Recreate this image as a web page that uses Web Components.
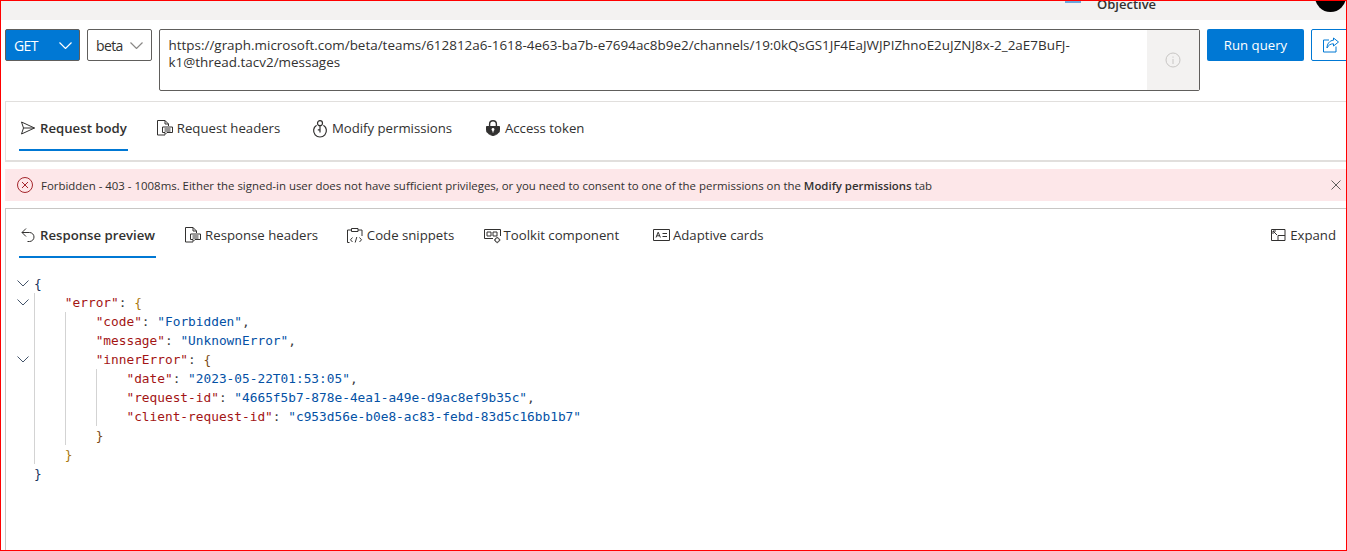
<!DOCTYPE html>
<html>
<head>
<meta charset="utf-8">
<title>Graph Explorer</title>
<style>
  html, body { margin: 0; padding: 0; background: #fff; }
</style>
</head>
<body>
<gx-app>
  <gx-top-strip></gx-top-strip>
  <gx-query-bar></gx-query-bar>
  <gx-panel kind="request">
    <gx-tab icon="send" active>Request body</gx-tab>
    <gx-tab icon="doc">Request headers</gx-tab>
    <gx-tab icon="perm" style="margin-left:1.6px">Modify permissions</gx-tab>
    <gx-tab icon="lock" style="margin-left:2.8px">Access token</gx-tab>
  </gx-panel>
  <gx-message-bar>Forbidden - 403 - 1008ms. Either the signed-in user does not have sufficient privileges, or you need to consent to one of the permissions on the <b style="font-weight:600">Modify permissions</b> tab</gx-message-bar>
  <gx-panel kind="response">
    <gx-tab icon="back" active>Response preview</gx-tab>
    <gx-tab icon="doc">Response headers</gx-tab>
    <gx-tab icon="code" style="margin-left:-1.3px">Code snippets</gx-tab>
    <gx-tab icon="toolkit" style="margin-left:-.7px">Toolkit component</gx-tab>
    <gx-tab icon="card" style="margin-left:3.8px">Adaptive cards</gx-tab>
    <gx-tab icon="expand" slot="end">Expand</gx-tab>
    <gx-json-view slot="body"></gx-json-view>
  </gx-panel>
</gx-app>

<script>
const UI_FONT = '"Open Sans", "Noto Sans", "Liberation Sans", sans-serif';

// icon strokes, all on a 16x16 box
const ICONS = {
  send: '<path d="M1.5 2 14.5 8 1.5 14 3.5 8ZM3.5 8H14.5"/>',
  doc: '<path d="M8 15H.5V.5H8L11.5 4V6M8 .5V4H11.5"/><path d="M5.5 7H15.5V12.5H10L8 14.5V12.5H5.5ZM7.5 9H13.5M7.5 11H13.5"/>',
  perm: '<circle cx="8" cy="3.2" r="2.5" stroke-width="1.2"/><path d="M4.6 5.2A6.4 6.4 0 1 0 11.4 5.2M8 5.8V12.5M8 9.8H5.8" stroke-width="1.2"/>',
  lock: '<path d="M4.6 7V4.2A3.4 3.4 0 0 1 11.4 4.2V7" stroke-width="1.4"/><path d="M1.5 6.5H14.5V10.5C14.5 13 11 15 8 15.5 5 15 1.5 13 1.5 10.5Z" fill="currentColor"/><circle cx="8" cy="9.5" r="1.4" fill="#fff" stroke="none"/><path d="M8 10V12.5" stroke="#fff"/>',
  back: '<path d="M6 1.5 2 5.5 6 9.5M2 5.5H9.5A4.5 4.5 0 0 1 9.5 14.5H7.5"/>',
  code: '<path d="M2.5 15.5H.5V3H4.5M11 3H15V9M4.5 1.5H11V4.5H4.5Z"/><path d="M5.5 10.5 3.5 12.8 5.5 15M12.5 10.5 14.5 12.8 12.5 15M9.8 10 8.2 15.5"/>',
  toolkit: '<path d="M9 11.5H.5V2.5H16.5V9"/><path d="M3 5H7V9H3ZM9 5H13V9H9Z"/><circle cx="13.2" cy="13" r="2.2"/><path d="M13.2 9.8V10.8M13.2 15.2V16.2M10 13H11M15.4 13H16.4"/>',
  card: '<path d="M.5 2.5H16.5V13.5H.5Z"/><path d="M3 10.5 5.2 5.2 7.4 10.5M3.9 8.8H6.5M9.5 6.5H14M9.5 9.5H14"/>',
  expand: '<path d="M1.5 2.5H15V13.5H1.5Z"/><path d="M8 13.5V8.5H15M3 4 7 8M3 4H6M3 4V7"/>'
};

class GxIcon extends HTMLElement {
  constructor() {
    super();
    this.attachShadow({ mode: 'open' });
  }
  connectedCallback() {
    const body = ICONS[this.getAttribute('name')] || '';
    this.shadowRoot.innerHTML = `
      <style>
        :host { display: inline-flex; flex: none; width: 16px; height: 16px; color: #323130; }
        svg { width: 16px; height: 16px; overflow: visible; fill: none; stroke: currentColor; stroke-width: 1; }
      </style>
      <svg viewBox="0 0 16 16">${body}</svg>`;
  }
}
customElements.define('gx-icon', GxIcon);

const appTemplate = document.createElement('template');
appTemplate.innerHTML = `
  <style>
    :host {
      display: flex; flex-direction: column; box-sizing: border-box;
      width: 1347px; height: 551px; border: 1px solid #f00; overflow: hidden;
      background: #fff; color: #323130; font: 14px ${UI_FONT};
    }
  </style>
  <slot></slot>`;
class GxApp extends HTMLElement {
  constructor() {
    super();
    this.attachShadow({ mode: 'open' });
    this.shadowRoot.appendChild(appTemplate.content.cloneNode(true));
  }
}
customElements.define('gx-app', GxApp);

const stripTemplate = document.createElement('template');
stripTemplate.innerHTML = `
  <style>
    :host {
      display: flex; align-items: flex-end; flex: none; height: 19px;
      background: #f3f2f1; overflow: hidden;
    }
    .mark { flex: none; width: 16px; height: 2px; margin: 0 0 17px 1064px; background: #6ca7dc; }
    .name { flex: none; margin: 0 0 8px 16px; font-size: 13px; font-weight: 600; line-height: 16px; white-space: nowrap; }
    .avatar { flex: none; width: 31px; height: 31px; margin: 0 0 8px auto; border-radius: 50%; background: #000; }
  </style>
  <span class="mark"></span>
  <span class="name">Objective</span>
  <span class="avatar"></span>`;
class GxTopStrip extends HTMLElement {
  constructor() {
    super();
    this.attachShadow({ mode: 'open' });
    this.shadowRoot.appendChild(stripTemplate.content.cloneNode(true));
  }
}
customElements.define('gx-top-strip', GxTopStrip);

const queryTemplate = document.createElement('template');
queryTemplate.innerHTML = `
  <style>
    :host { display: flex; flex: none; align-items: flex-start; gap: 7px; margin: 9px 0 10px 4px; height: 62px; }
    :host > * { flex: none; }
    .select {
      box-sizing: border-box; display: flex; align-items: center; justify-content: space-between;
      height: 32px; border: 1px solid #605e5c; border-radius: 2px; padding: 0 7px 0 8px; letter-spacing: -.6px;
    }
    .method { width: 75px; background: #0078d4; color: #fff; }
    .version { width: 65px; background: #fff; }
    .method svg, .version svg { width: 13px; height: 7px; fill: none; stroke-width: 1.2; }
    .method svg { stroke: #fff; margin-right: 0; }
    .version svg { stroke: #8a8886; margin-right: 1px; }
    .url {
      box-sizing: border-box; display: flex; width: 1041px; height: 62px;
      border: 1px solid #605e5c; border-radius: 2px; background: #fff;
    }
    .text { flex: 1; padding: 7px 0 0 8.5px; line-height: 17px; white-space: nowrap; font-size: 13.45px; }
    .info { flex: none; width: 52px; display: flex; align-items: center; justify-content: center; background: #f3f2f1; }
    .info svg { width: 16px; height: 16px; fill: none; stroke: #c8c6c4; }
    .run {
      box-sizing: border-box; width: 97px; height: 32px; display: flex; align-items: center; justify-content: center;
      background: #0078d4; color: #fff; border-radius: 2px; font-weight: 500; font-size: 13.2px;
    }
    .share {
      box-sizing: border-box; width: 40px; height: 32px; display: flex; align-items: center; padding-left: 11px;
      border: 1px solid #0078d4; border-radius: 2px; background: #fff;
    }
    .share svg { width: 16px; height: 16px; fill: none; stroke: #0078d4; }
  </style>
  <div class="select method"><span>GET</span><svg viewBox="0 0 13 7"><path d="M.5 .5 6.5 6.5 12.5 .5"/></svg></div>
  <div class="select version"><span>beta</span><svg viewBox="0 0 13 7"><path d="M.5 .5 6.5 6.5 12.5 .5"/></svg></div>
  <div class="url">
    <div class="text">https://graph.microsoft.com/beta/teams/612812a6-1618-4e63-ba7b-e7694ac8b9e2/channels/19:0kQsGS1JF4EaJWJPIZhnoE2uJZNJ8x-2_2aE7BuFJ-<br>k1@thread.tacv2/messages</div>
    <div class="info"><svg viewBox="0 0 16 16"><circle cx="8" cy="8" r="7"/><path d="M8 7V12M8 4.5V5.7"/></svg></div>
  </div>
  <div class="run">Run query</div>
  <div class="share"><svg viewBox="0 0 16 16"><path d="M6 3H.5V15H13V9.5"/><path d="M10.5 1 15.5 5 10.5 9V6.8C7.5 6.8 5.5 8 4 11 4 7 6.5 3.5 10.5 3.2Z"/></svg></div>`;
class GxQueryBar extends HTMLElement {
  constructor() {
    super();
    this.attachShadow({ mode: 'open' });
    this.shadowRoot.appendChild(queryTemplate.content.cloneNode(true));
  }
}
customElements.define('gx-query-bar', GxQueryBar);

const panelTemplate = document.createElement('template');
panelTemplate.innerHTML = `
  <style>
    :host {
      display: block; flex: none; box-sizing: border-box; margin-left: 4px;
      border-top: 1px solid #e1dfdd; border-left: 1px solid #e1dfdd;
    }
    :host([kind="request"]) { height: 61px; border-bottom: 2px solid #e1dfdd; }
    :host([kind="response"]) { flex: 1; border-color: #c8c6c4; }
    .tabs { display: flex; gap: 28px; padding: 0 9px 0 13px; }
    .end { display: block; margin-left: auto; }
  </style>
  <div class="tabs"><slot></slot><slot name="end" class="end"></slot></div>
  <slot name="body"></slot>`;
class GxPanel extends HTMLElement {
  constructor() {
    super();
    this.attachShadow({ mode: 'open' });
    this.shadowRoot.appendChild(panelTemplate.content.cloneNode(true));
  }
}
customElements.define('gx-panel', GxPanel);

class GxTab extends HTMLElement {
  constructor() {
    super();
    this.attachShadow({ mode: 'open' });
  }
  connectedCallback() {
    this.shadowRoot.innerHTML = `
      <style>
        :host {
          display: flex; align-items: center; gap: 4px; box-sizing: border-box;
          height: 49px; padding: 4px 1px 2px; white-space: nowrap; font-size: 13.2px;
        }
        :host([active]) { font-weight: 600; border-bottom: 2px solid #0078d4; padding-bottom: 0; }
      </style>
      <gx-icon name="${this.getAttribute('icon')}"></gx-icon>
      <span><slot></slot></span>`;
  }
}
customElements.define('gx-tab', GxTab);

const messageTemplate = document.createElement('template');
messageTemplate.innerHTML = `
  <style>
    :host {
      display: flex; flex: none; align-items: center; box-sizing: border-box;
      height: 32px; margin: 7px 0 7px 4px; padding: 0 5px 0 12px; background: #fde7e9;
      font-size: 11.43px; white-space: nowrap;
    }
    svg { flex: none; width: 16px; height: 16px; margin-right: 8px; fill: none; stroke: #a4262c; }
    .text { flex: 1; }
    .close { margin: 0; width: 10px; height: 10px; stroke: #605e5c; }
  </style>
  <svg viewBox="0 0 16 16"><circle cx="8" cy="8" r="7.5"/><path d="M5 5 11 11M11 5 5 11"/></svg>
  <span class="text"><slot></slot></span>
  <svg class="close" viewBox="0 0 10 10"><path d="M.5 .5 9.5 9.5M9.5 .5 .5 9.5"/></svg>`;
class GxMessageBar extends HTMLElement {
  constructor() {
    super();
    this.attachShadow({ mode: 'open' });
    this.shadowRoot.appendChild(messageTemplate.content.cloneNode(true));
  }
}
customElements.define('gx-message-bar', GxMessageBar);

const RESPONSE = {
  error: {
    code: 'Forbidden',
    message: 'UnknownError',
    innerError: {
      date: '2023-05-22T01:53:05',
      'request-id': '4665f5b7-878e-4ea1-a49e-d9ac8ef9b35c',
      'client-request-id': 'c953d56e-b0e8-ac83-febd-83d5c16bb1b7'
    }
  }
};

class GxJsonView extends HTMLElement {
  constructor() {
    super();
    this.attachShadow({ mode: 'open' });
  }
  connectedCallback() {
    this.folds = [];
    const code = this.renderObject(RESPONSE, '', '', 0);
    const chevron = '<svg viewBox="0 0 12 7"><path d="M.5 .5 6 6 11.5 .5"/></svg>';
    const gutter = this.folds.map(f => `<div class="row">${f ? chevron : ''}</div>`).join('');
    this.shadowRoot.innerHTML = `
      <style>
        :host {
          display: flex; padding-top: 16px;
          font: 12.8px/19px "DejaVu Sans Mono", "Liberation Mono", monospace;
          color: #3b3b3b;
        }
        .gutter { flex: none; width: 28px; }
        .row { height: 19px; display: flex; align-items: center; padding-left: 11px; }
        .row svg { width: 12px; height: 7px; fill: none; stroke: #44546a; }
        .line { height: 19px; white-space: pre; }
        .block { margin: 0; padding-left: calc(4ch - 1px); border-left: 1px solid #d3d3d3; }
        .k { color: #a31515; }
        .s { color: #0451a5; }
        .b0 { color: #16325c; }
        .b1 { color: #a9770d; }
        .b2 { color: #7b4a14; }
      </style>
      <div class="gutter">${gutter}</div>
      <div class="code">${code}</div>`;
  }
  // opening line, a guided block of children, closing line
  renderObject(obj, prefix, comma, depth) {
    this.folds.push(true);
    const keys = Object.keys(obj);
    const inner = keys.map((key, i) => {
      const tail = i < keys.length - 1 ? ',' : '';
      const label = `<span class="k">"${key}"</span>: `;
      if (typeof obj[key] === 'object') return this.renderObject(obj[key], label, tail, depth + 1);
      this.folds.push(false);
      return `<div class="line">${label}<span class="s">"${obj[key]}"</span>${tail}</div>`;
    }).join('');
    this.folds.push(false);
    const brace = `b${depth}`;
    return `<div class="line">${prefix}<span class="${brace}">{</span></div>` +
      `<div class="block">${inner}</div>` +
      `<div class="line"><span class="${brace}">}</span>${comma}</div>`;
  }
}
customElements.define('gx-json-view', GxJsonView);
</script>
</body>
</html>
